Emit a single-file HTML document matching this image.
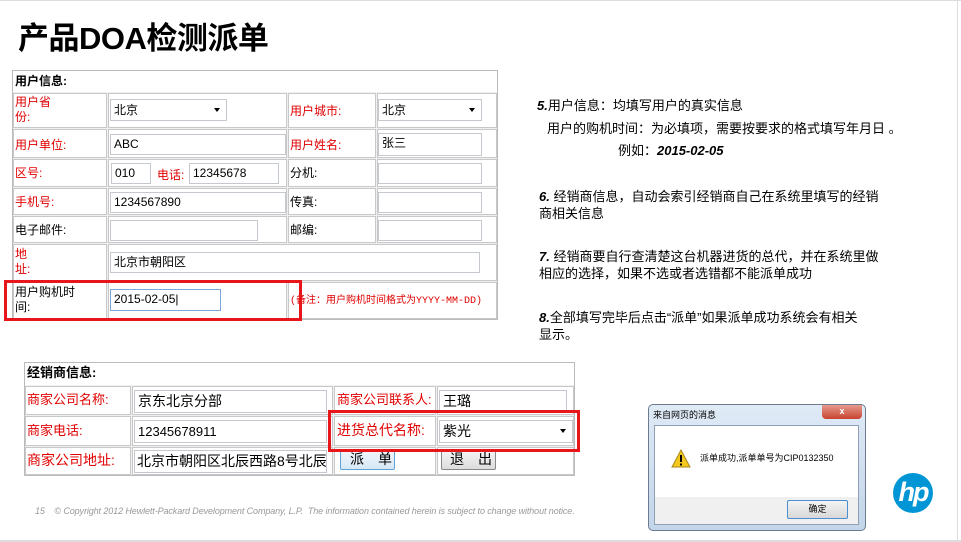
<!DOCTYPE html>
<html><head><meta charset="utf-8"><style>
*{margin:0;padding:0;box-sizing:border-box}
body{width:961px;height:542px;background:#fff;position:relative;overflow:hidden;font-family:"Liberation Sans","Noto Sans CJK SC",sans-serif;color:#000}
.a{position:absolute}
.c{position:absolute;border:1px solid #c8c8c8;background:#fff}
.t{position:absolute;font-size:12px;line-height:14px;white-space:nowrap}
.r{color:#e00000}
.i{position:absolute;border:1px solid #c4c8cf;background:#fff;font-size:12px;line-height:18px;padding-left:3px;white-space:nowrap;overflow:hidden}
.dd::after{content:"";position:absolute;right:6px;top:8px;border:3px solid transparent;border-top:4px solid #000}
.p{position:absolute;font-size:13px;line-height:16px;white-space:nowrap;font-family:"Liberation Sans","Noto Sans CJK SC",sans-serif}
</style></head><body>
<div class="a" style="left:0;top:0;width:961px;height:1px;background:#ddd"></div>
<div class="a" style="left:957px;top:0;width:1px;height:542px;background:#ddd"></div>
<div class="a" style="left:18px;top:19px;font-size:31px;font-weight:bold;line-height:40px;font-family:'Liberation Sans','Noto Sans CJK SC',sans-serif;letter-spacing:-0.5px">产品DOA检测派单</div>

<div class="a" style="left:12px;top:70px;width:486px;height:250px;border:1px solid #bbb;background:#f0f0f0"></div>
<div class="c" style="left:13px;top:71px;width:484px;height:21px;border:none"></div>
<div class="t" style="left:15px;top:74px;font-weight:bold">用户信息:</div>
<div class="c" style="left:13px;top:93px;width:94px;height:35px"></div>
<div class="c" style="left:108px;top:93px;width:179px;height:35px"></div>
<div class="c" style="left:288px;top:93px;width:88px;height:35px"></div>
<div class="c" style="left:377px;top:93px;width:120px;height:35px"></div>
<div class="c" style="left:13px;top:129px;width:94px;height:29px"></div>
<div class="c" style="left:108px;top:129px;width:179px;height:29px"></div>
<div class="c" style="left:288px;top:129px;width:88px;height:29px"></div>
<div class="c" style="left:377px;top:129px;width:120px;height:29px"></div>
<div class="c" style="left:13px;top:159px;width:94px;height:28px"></div>
<div class="c" style="left:108px;top:159px;width:179px;height:28px"></div>
<div class="c" style="left:288px;top:159px;width:88px;height:28px"></div>
<div class="c" style="left:377px;top:159px;width:120px;height:28px"></div>
<div class="c" style="left:13px;top:188px;width:94px;height:27px"></div>
<div class="c" style="left:108px;top:188px;width:179px;height:27px"></div>
<div class="c" style="left:288px;top:188px;width:88px;height:27px"></div>
<div class="c" style="left:377px;top:188px;width:120px;height:27px"></div>
<div class="c" style="left:13px;top:216px;width:94px;height:27px"></div>
<div class="c" style="left:108px;top:216px;width:179px;height:27px"></div>
<div class="c" style="left:288px;top:216px;width:88px;height:27px"></div>
<div class="c" style="left:377px;top:216px;width:120px;height:27px"></div>
<div class="c" style="left:13px;top:244px;width:94px;height:37px"></div>
<div class="c" style="left:108px;top:244px;width:389px;height:37px"></div>
<div class="c" style="left:13px;top:282px;width:94px;height:37px"></div>
<div class="c" style="left:108px;top:282px;width:179px;height:37px"></div>
<div class="c" style="left:288px;top:282px;width:209px;height:37px"></div>
<div class="t r" style="left:15px;top:95px;line-height:15px">用户省<br>份:</div>
<div class="t r" style="left:290px;top:104px">用户城市:</div>
<div class="t r" style="left:15px;top:138px">用户单位:</div>
<div class="t r" style="left:290px;top:138px">用户姓名:</div>
<div class="t r" style="left:15px;top:166px">区号:</div>
<div class="t r" style="left:157px;top:168px">电话:</div>
<div class="t" style="left:290px;top:166px">分机:</div>
<div class="t r" style="left:15px;top:195px">手机号:</div>
<div class="t" style="left:290px;top:195px">传真:</div>
<div class="t" style="left:15px;top:223px">电子邮件:</div>
<div class="t" style="left:290px;top:223px">邮编:</div>
<div class="t r" style="left:15px;top:247px;line-height:15px">地<br>址:</div>
<div class="t" style="left:15px;top:285px;line-height:15px">用户购机时<br>间:</div>
<div class="t r" style="left:290px;top:295px;font-size:10px;font-family:'Liberation Mono','Noto Sans CJK SC',monospace">(备注：用户购机时间格式为YYYY-MM-DD)</div>
<div class="i dd" style="left:110px;top:99px;width:117px;height:22px;line-height:20px">北京</div>
<div class="i dd" style="left:378px;top:99px;width:104px;height:22px;line-height:20px">北京</div>
<div class="i" style="left:110px;top:134px;width:176px;height:21px">ABC</div>
<div class="i" style="left:378px;top:133px;width:104px;height:23px">张三</div>
<div class="i" style="left:111px;top:163px;width:40px;height:21px">010</div>
<div class="i" style="left:189px;top:163px;width:90px;height:21px">12345678</div>
<div class="i" style="left:378px;top:163px;width:104px;height:21px"></div>
<div class="i" style="left:110px;top:192px;width:176px;height:21px">1234567890</div>
<div class="i" style="left:378px;top:192px;width:104px;height:21px"></div>
<div class="i" style="left:110px;top:220px;width:148px;height:21px"></div>
<div class="i" style="left:378px;top:220px;width:104px;height:21px"></div>
<div class="i" style="left:110px;top:252px;width:370px;height:21px">北京市朝阳区</div>
<div class="i" style="left:110px;top:289px;width:111px;height:22px;border-color:#7aa7d8">2015-02-05|</div>
<div class="a" style="left:4px;top:280px;width:298px;height:41px;border:3px solid #e8151b"></div>

<div class="a" style="left:24px;top:362px;width:551px;height:114px;border:1px solid #bbb;background:#f0f0f0"></div>
<div class="c" style="left:25px;top:363px;width:549px;height:22px;border:none"></div>
<div class="t" style="left:27px;top:366px;font-weight:bold;font-size:13px">经销商信息:</div>
<div class="c" style="left:25px;top:386px;width:106px;height:29px"></div>
<div class="c" style="left:132px;top:386px;width:201px;height:29px"></div>
<div class="c" style="left:334px;top:386px;width:102px;height:29px"></div>
<div class="c" style="left:437px;top:386px;width:137px;height:29px"></div>
<div class="c" style="left:25px;top:416px;width:106px;height:30px"></div>
<div class="c" style="left:132px;top:416px;width:201px;height:30px"></div>
<div class="c" style="left:334px;top:416px;width:102px;height:30px"></div>
<div class="c" style="left:437px;top:416px;width:137px;height:30px"></div>
<div class="c" style="left:25px;top:447px;width:106px;height:28px"></div>
<div class="c" style="left:132px;top:447px;width:201px;height:28px"></div>
<div class="c" style="left:334px;top:447px;width:102px;height:28px"></div>
<div class="c" style="left:437px;top:447px;width:137px;height:28px"></div>
<div class="t r" style="left:27px;top:393px;font-size:13px">商家公司名称:</div>
<div class="t r" style="left:337px;top:393px;font-size:13px">商家公司联系人:</div>
<div class="t r" style="left:27px;top:424px;font-size:13px">商家电话:</div>
<div class="t r" style="left:337px;top:423px;font-size:14px">进货总代名称:</div>
<div class="t r" style="left:27px;top:453px;font-size:14px">商家公司地址:</div>
<div class="i" style="left:134px;top:390px;width:193px;height:23px;font-size:14px;line-height:20px">京东北京分部</div>
<div class="i" style="left:439px;top:390px;width:128px;height:23px;font-size:14px;line-height:20px">王璐</div>
<div class="i" style="left:134px;top:420px;width:193px;height:23px;font-size:13px;line-height:21px">12345678911</div>
<div class="i dd" style="left:439px;top:420px;width:134px;height:23px;font-size:14px;line-height:21px">紫光</div>
<div class="i" style="left:134px;top:450px;width:193px;height:23px;font-size:14px;line-height:20px;padding-left:2px">北京市朝阳区北辰西路8号北辰世</div>
<div class="a" style="left:340px;top:449px;width:55px;height:21px;border:1px solid #5fa3d8;border-radius:2px;background:linear-gradient(#f2f7fc,#d6e8f6);font-size:14px;line-height:18px;padding-left:9px">派　单</div>
<div class="a" style="left:441px;top:449px;width:55px;height:21px;border:1px solid #888;border-radius:2px;background:linear-gradient(#f6f6f6,#dcdcdc);font-size:14px;line-height:18px;padding-left:8px">退　出</div>
<div class="a" style="left:328px;top:410px;width:252px;height:42px;border:3px solid #e8151b"></div>

<div class="a" style="left:35px;top:506px;font-size:9px;color:#999;font-style:italic;white-space:nowrap;letter-spacing:-0.1px">15&nbsp;&nbsp;&nbsp;&nbsp;© Copyright 2012 Hewlett-Packard Development Company, L.P.&nbsp; The information contained herein is subject to change without notice.</div>

<div class="p" style="left:537px;top:98px"><b><i>5.</i></b>用户信息：均填写用户的真实信息</div>
<div class="p" style="left:547px;top:121px">用户的购机时间：为必填项，需要按要求的格式填写年月日 。</div>
<div class="p" style="left:618px;top:143px">例如：<b><i>2015-02-05</i></b></div>
<div class="p" style="left:539px;top:188px;line-height:17px"><b><i>6.</i></b> 经销商信息，自动会索引经销商自己在系统里填写的经销<br>商相关信息</div>
<div class="p" style="left:539px;top:248px;line-height:17px"><b><i>7.</i></b> 经销商要自行查清楚这台机器进货的总代，并在系统里做<br>相应的选择，如果不选或者选错都不能派单成功</div>
<div class="p" style="left:539px;top:309px;line-height:17px"><b><i>8.</i></b>全部填写完毕后点击“派单”如果派单成功系统会有相关<br>显示。</div>

<div class="a" style="left:648px;top:404px;width:218px;height:127px;border:1px solid #6d7b8c;border-radius:5px;background:linear-gradient(#dfeaf6,#c3d5ea)"></div>
<div class="a" style="left:653px;top:408px;font-size:9px;white-space:nowrap">来自网页的消息</div>
<div class="a" style="left:822px;top:405px;width:40px;height:14px;border-radius:0 0 4px 4px;background:linear-gradient(#e59a8d,#c8432f);color:#fff;font-size:9px;text-align:center;line-height:13px;font-weight:bold">x</div>
<div class="a" style="left:654px;top:425px;width:205px;height:100px;border:1px solid #8fa0b4;background:#f0f0f0"></div>
<div class="a" style="left:655px;top:426px;width:203px;height:71px;background:#fff"></div>
<svg class="a" style="left:671px;top:449px" width="20" height="19" viewBox="0 0 20 19"><path d="M10 1 L19 18 L1 18 Z" fill="#f4c81c" stroke="#a8861a" stroke-width="1"/><rect x="9" y="6" width="2" height="7" fill="#000"/><rect x="9" y="14.5" width="2" height="2" fill="#000"/></svg>
<div class="a" style="left:700px;top:451px;font-size:9px;white-space:nowrap">派单成功,派单单号为CIP0132350</div>
<div class="a" style="left:787px;top:500px;width:61px;height:19px;border:1px solid #4a8fd0;border-radius:2px;background:linear-gradient(#f4f4f4,#d8d8d8);font-size:9px;text-align:center;line-height:17px">确定</div>

<div class="a" style="left:893px;top:473px;width:40px;height:40px;border-radius:50%;background:#0096d6;color:#fff;font-size:27px;font-style:italic;font-weight:bold;text-align:center;line-height:38px;font-family:'Liberation Sans',sans-serif;letter-spacing:-2px">hp</div>
<div class="a" style="left:0;top:540px;width:961px;height:2px;background:#ddd"></div>
</body></html>
